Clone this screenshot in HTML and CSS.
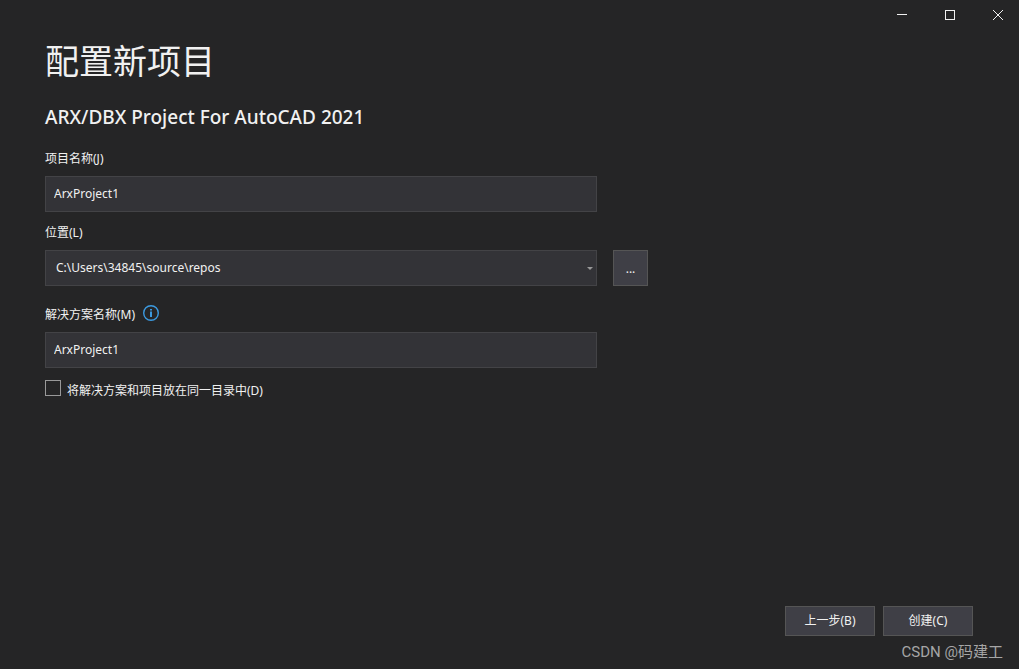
FILE: index.html
```html
<!DOCTYPE html>
<html lang="zh-CN">
<head>
<meta charset="utf-8">
<meta name="viewport" content="width=device-width, initial-scale=1">
<title>配置新项目</title>
<link rel="stylesheet" href="styles.css">
</head>
<body>
<div class="window">
  <header class="titlebar">
    <button class="caption" type="button" aria-label="最小化">
      <svg width="10" height="10" viewBox="0 0 10 10" shape-rendering="crispEdges"><path d="M0 4.5H10"/></svg>
    </button>
    <button class="caption" type="button" aria-label="最大化">
      <svg width="10" height="10" viewBox="0 0 10 10" shape-rendering="crispEdges"><path d="M.5 .5H9.5V9.5H.5Z"/></svg>
    </button>
    <button class="caption" type="button" aria-label="关闭">
      <svg width="10" height="10" viewBox="0 0 10 10"><path d="M0 0L10 10M10 0L0 10"/></svg>
    </button>
  </header>

  <main class="content">
    <h1 class="title">配置新项目</h1>
    <h2 class="template">ARX/DBX Project For AutoCAD 2021</h2>
    <form class="form" id="config">
      <div class="field">
        <label class="label" for="project">项目名称(J)</label>
        <input class="control" id="project" type="text" value="ArxProject1">
      </div>
      <div class="field">
        <label class="label" for="location">位置(L)</label>
        <div class="location">
          <div class="combo">
            <select class="control select" id="location">
              <option>C:\Users\34845\source\repos</option>
            </select>
            <svg class="arrow" width="6" height="3" viewBox="0 0 6 3"><path d="M0 0H6L3 3Z"/></svg>
          </div>
          <button class="button browse" type="button">...</button>
        </div>
      </div>
      <div class="field solution">
        <div class="label-row">
          <label class="label" for="solution">解决方案名称(M)</label>
          <svg class="info" width="16" height="16" viewBox="0 0 16 16"><circle cx="8" cy="8" r="7.3"/><path d="M7 4H9V5.500H7ZM7 6.500H9V12H7Z"/></svg>
        </div>
        <input class="control" id="solution" type="text" value="ArxProject1">
      </div>
      <div class="check-row">
        <input class="check" id="same" type="checkbox">
        <label class="label" for="same">将解决方案和项目放在同一目录中(D)</label>
      </div>
    </form>
  </main>

  <footer class="footer">
    <div class="actions">
      <button class="button action" type="button">上一步(B)</button>
      <button class="button action" type="submit" form="config">创建(C)</button>
    </div>
    <p class="credit">CSDN @码建工</p>
  </footer>
</div>
</body>
</html>
```
FILE: styles.css
```css
* {
  box-sizing: border-box;
}

body {
  margin: 0;
  background: #252526;
  color: #f1f1f1;
  font: 12px/16px "Noto Sans", "Noto Sans CJK SC", sans-serif;
}

button,
input,
select {
  margin: 0;
  color: inherit;
  font: inherit;
}

.window {
  display: flex;
  flex-direction: column;
  min-height: 100vh;
}

.titlebar {
  display: flex;
  justify-content: flex-end;
  gap: 6px;
  height: 30px;
}

.caption {
  display: grid;
  place-items: center;
  width: 42px;
  padding: 0;
  border: 0;
  background: none;
}

.caption svg {
  fill: none;
  stroke: #f1f1f1;
}

.content {
  flex: 1;
  padding: 8px 45px 0;
}

.title {
  margin: 0;
  font-size: 34px;
  line-height: 46px;
  font-weight: 400;
}

.template {
  margin: 20px 0 0;
  font-size: 19px;
  line-height: 26px;
  font-weight: 500;
}

.form {
  display: flex;
  flex-direction: column;
  gap: 11px;
  margin-top: 19px;
}

.field {
  display: flex;
  flex-direction: column;
  gap: 9px;
}

.field.solution {
  margin-top: 8px;
}

.label {
  padding-top: 2px;
}

.control {
  width: 100%;
  max-width: 552px;
  height: 36px;
  padding: 0 8px 2px;
  border: 1px solid #434346;
  border-radius: 0;
  background: #333337;
}

.location {
  display: flex;
  gap: 16px;
}

.combo {
  position: relative;
  flex: 0 1 552px;
}

.select {
  display: block;
  padding: 0 20px 0 10px;
  appearance: none;
}

.arrow {
  position: absolute;
  top: 17px;
  right: 4px;
  fill: #999999;
  pointer-events: none;
}

.button {
  border: 1px solid #555555;
  border-radius: 0;
  background: #3f3f46;
}

.browse {
  width: 35px;
  padding: 2px 0 0;
}

.label-row {
  display: flex;
  align-items: flex-start;
  gap: 8px;
}

.info circle {
  fill: none;
  stroke: #3c9ae0;
  stroke-width: 1.400;
}

.info path {
  fill: #3c9ae0;
}

.check-row {
  display: flex;
  gap: 6px;
  margin-top: 1px;
}

.check {
  width: 16px;
  height: 16px;
  border: 1px solid #999999;
  background: #252526;
  appearance: none;
}

.check:checked {
  background: #3c9ae0;
}

.check-row .label {
  padding-top: 3px;
}

.footer {
  display: flex;
  flex-direction: column;
  align-items: flex-end;
  gap: 6px;
  padding: 0 16px 7px;
}

.actions {
  display: flex;
  gap: 8px;
  padding-right: 30px;
}

.action {
  width: 90px;
  height: 30px;
  padding: 0;
}

.credit {
  margin: 0;
  color: #a6a6a6;
  font-family: Roboto, "Noto Sans CJK SC", sans-serif;
  font-size: 15px;
  line-height: 20px;
}
```
